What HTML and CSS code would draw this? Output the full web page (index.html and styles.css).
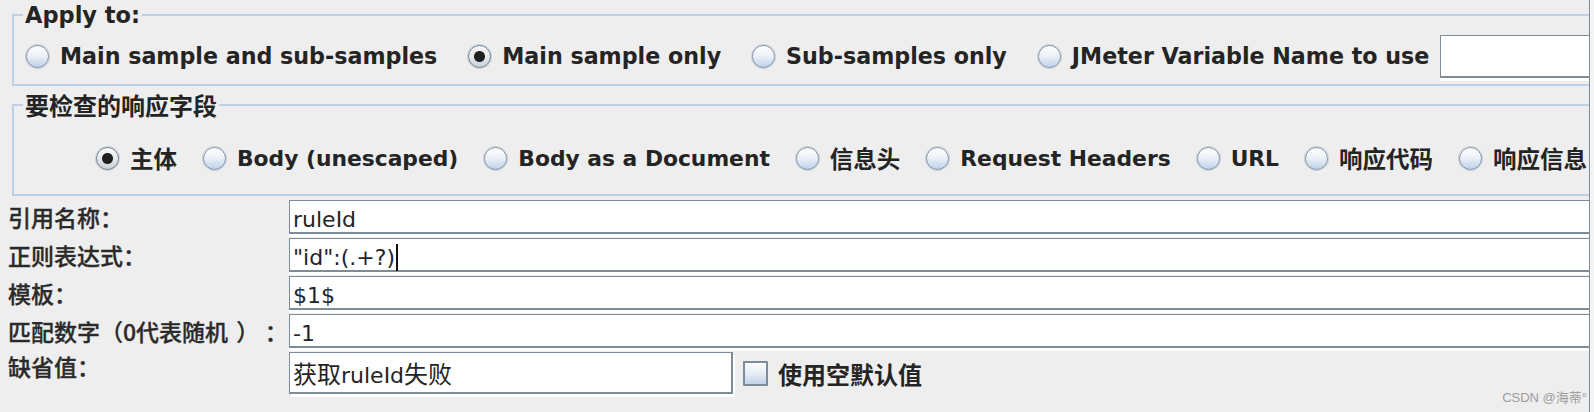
FILE: index.html
```html
<!DOCTYPE html>
<html lang="zh-CN">
<head>
<meta charset="utf-8">
<title>Regular Expression Extractor</title>
<link rel="stylesheet" href="styles.css">
</head>
<body>
<div class="window">
  <fieldset class="group group-apply">
    <legend>Apply to:</legend>
    <div class="radio-row apply-row">
      <label class="radio"><span class="dot"></span><span class="rtext">Main sample and sub-samples</span></label>
      <label class="radio"><span class="dot on"></span><span class="rtext">Main sample only</span></label>
      <label class="radio"><span class="dot"></span><span class="rtext">Sub-samples only</span></label>
      <label class="radio"><span class="dot"></span><span class="rtext">JMeter Variable Name to use</span></label>
      <div class="var-field"></div>
    </div>
  </fieldset>

  <fieldset class="group group-fields">
    <legend>要检查的响应字段</legend>
    <div class="radio-row fields-row">
      <label class="radio"><span class="dot on"></span><span class="rtext cjk-text">主体</span></label>
      <label class="radio"><span class="dot"></span><span class="rtext">Body (unescaped)</span></label>
      <label class="radio"><span class="dot"></span><span class="rtext">Body as a Document</span></label>
      <label class="radio"><span class="dot"></span><span class="rtext cjk-text">信息头</span></label>
      <label class="radio"><span class="dot"></span><span class="rtext">Request Headers</span></label>
      <label class="radio"><span class="dot"></span><span class="rtext">URL</span></label>
      <label class="radio"><span class="dot"></span><span class="rtext cjk-text">响应代码</span></label>
      <label class="radio"><span class="dot"></span><span class="rtext cjk-text">响应信息</span></label>
    </div>
  </fieldset>

  <div class="form">
    <div class="form-row">
      <div class="label">引用名称：</div>
      <div class="field">ruleId</div>
    </div>
    <div class="form-row">
      <div class="label">正则表达式：</div>
      <div class="field">"id":(.+?)<span class="caret"></span></div>
    </div>
    <div class="form-row">
      <div class="label">模板：</div>
      <div class="field">$1$</div>
    </div>
    <div class="form-row">
      <div class="label">匹配数字（0代表随机<span class="close-paren">）</span>：</div>
      <div class="field">-1</div>
    </div>
    <div class="form-row">
      <div class="label label-up">缺省值：</div>
      <div class="field field-short"><span class="cjk">获取</span>ruleId<span class="cjk">失败</span></div>
      <label class="check"><span class="box"></span><span>使用空默认值</span></label>
    </div>
  </div>

  <div class="watermark">CSDN @海蒂°</div>
</div>
</body>
</html>
```

FILE: styles.css
```css
* {
  box-sizing: border-box;
}

html {
  background: #f4f4f4;
}

body {
  margin: 0;
}

.window {
  position: relative;
  width: 1590px;
  height: 412px;
  overflow: hidden;
  padding-top: 2px;
  background: #eeeeee;
  border-right: 1px solid #7e8c9a;
  color: #242424;
  font-family: "DejaVu Sans", "Noto Sans CJK SC", sans-serif;
}

/* ---------- titled groups ---------- */
.group {
  min-width: 0;
  margin: 0 -140px 0 12px;
  padding: 0;
  border: 2px solid #bdd0e6;
}

.group legend {
  margin-left: 9px;
  padding: 0 2px;
  font-size: 22.5px;
  font-weight: bold;
  line-height: 26px;
}

.group-fields {
  margin-top: 6px;
}

.group-fields legend {
  font-family: "Noto Sans CJK SC", sans-serif;
  font-size: 24px;
}

/* ---------- radio rows ---------- */
.radio-row {
  display: flex;
  align-items: center;
}

.apply-row {
  gap: 31px;
  height: 56px;
  padding-left: 12px;
  font-size: 22.2px;
}

.fields-row {
  gap: 26px;
  height: 76px;
  padding-top: 4px;
  padding-left: 82px;
  font-size: 21.8px;
}

.radio {
  display: flex;
  flex: none;
  align-items: center;
  gap: 11px;
  font-weight: bold;
  white-space: nowrap;
}

.cjk-text {
  font-family: "Noto Sans CJK SC", sans-serif;
  font-size: 23.5px;
}

.dot {
  flex: none;
  width: 23px;
  height: 23px;
  border: 1px solid #8193a8;
  border-radius: 50%;
  background: linear-gradient(#fdfdfe 0%, #edf2f8 45%, #bfd2e9 100%);
  box-shadow: inset 0 1px 1px rgba(255, 255, 255, 0.9), 0 0 0 1px rgba(140, 155, 172, 0.35);
}

.dot.on {
  border-color: #6f7e8f;
  background:
    radial-gradient(circle at 50% 50%, #202020 0, #202020 5px, rgba(32, 32, 32, 0) 6px),
    linear-gradient(#f8f8f8 0%, #e4e7ea 55%, #c9d0d8 100%);
}

.var-field {
  flex: 1 0 300px;
  height: 43px;
  margin-left: -20px;
  background: #ffffff;
  border-top: 1px solid #7e8c9a;
  border-left: 1px solid #7e8c9a;
  border-bottom: 2px solid #7e8c9a;
  box-shadow: 0 3px 0 #ffffff;
}

/* ---------- form rows ---------- */
.form {
  margin-top: 4px;
  padding-left: 8px;
}

.form-row {
  display: flex;
  align-items: flex-start;
  margin-bottom: 4px;
}

.label {
  flex: none;
  width: 281px;
  height: 34px;
  font-family: "Noto Sans CJK SC", sans-serif;
  font-size: 23px;
  font-weight: 500;
  line-height: 34px;
  color: #2a2a2a;
  -webkit-text-stroke: 0.3px #2a2a2a;
  white-space: nowrap;
}

.label-up {
  margin-top: -3px;
}

.close-paren {
  padding-left: 8px;
  padding-right: 17px;
}

.field {
  flex: 1;
  height: 34px;
  padding: 3px 0 0 3px;
  background: #ffffff;
  border-top: 1px solid #7e8c9a;
  border-left: 1px solid #7e8c9a;
  border-bottom: 2px solid #7e8c9a;
  box-shadow: 0 3px 0 #ffffff;
  font-size: 22px;
  line-height: 31px;
  white-space: nowrap;
}

.field-short {
  flex: none;
  width: 444px;
  height: 42px;
  padding-top: 4px;
  border-right: 2px solid #7e8c9a;
  box-shadow: 2px 3px 0 #ffffff;
}

.cjk {
  font-family: "Noto Sans CJK SC", sans-serif;
  font-size: 24px;
}

.caret {
  display: inline-block;
  width: 2px;
  height: 27px;
  margin-left: 1px;
  vertical-align: -6px;
  background: #111111;
}

.check {
  display: flex;
  align-self: center;
  align-items: center;
  gap: 10px;
  margin-left: 10px;
  font-family: "Noto Sans CJK SC", sans-serif;
  font-size: 24px;
  font-weight: bold;
  white-space: nowrap;
}

.box {
  flex: none;
  width: 25px;
  height: 25px;
  border: 2px solid #7e8c9a;
  border-radius: 1px;
  background: linear-gradient(#fbfcfe 0%, #e9eff6 45%, #c2d3e7 100%);
}

/* ---------- overlay watermark ---------- */
.watermark {
  position: absolute;
  right: 2px;
  bottom: 6px;
  font-family: "Liberation Sans", "Noto Sans CJK SC", sans-serif;
  font-size: 13px;
  color: #9c9c9c;
}
```
